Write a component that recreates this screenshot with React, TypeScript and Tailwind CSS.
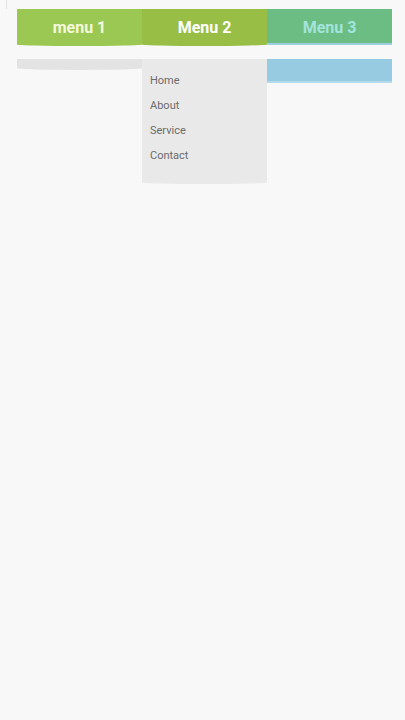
import React from "react";

export default function App() {
  const font = { fontFamily: "Roboto, 'Noto Sans', sans-serif" };
  return (
    <div className="relative min-h-[720px] w-[405px] bg-[#f8f8f8]" style={font}>
      <div className="absolute left-[6px] top-0 h-[9px] w-px bg-[#e2e2e2]" />
      <div className="flex pl-[17px] pt-[9px]">
        {/* column 1 */}
        <div className="flex w-[125px] flex-col">
          <div className="flex h-[34px] items-center justify-center bg-[#9bc753] pt-[3px] text-[16px] font-bold text-[#f4fadb]">
            menu 1
          </div>
          <div className="h-[3px] rounded-b-[50%] bg-[#9bc753]" />
          <div className="h-[13px]" />
          <div className="h-[7px] bg-[#e3e3e3]" />
          <div className="h-[4px] rounded-b-[50%] bg-[#e3e3e3]" />
        </div>
        {/* column 2 */}
        <div className="flex w-[125px] flex-col">
          <div className="flex h-[34px] items-center justify-center bg-[#98be45] pt-[3px] text-[16px] font-bold text-white">
            Menu 2
          </div>
          <div className="h-[3px] rounded-b-[50%] bg-[#98be45]" />
          <div className="h-[13px]" />
          <div className="flex h-[122px] flex-col bg-[#e9e9e9] px-[8px] pt-[14px] text-[11px] text-[#6b6b6b]">
            <div className="h-[25px] leading-[16px]">Home</div>
            <div className="h-[25px] leading-[16px]">About</div>
            <div className="h-[25px] leading-[16px]">Service</div>
            <div className="h-[25px] leading-[16px]">Contact</div>
          </div>
          <div className="h-[3px] rounded-b-[50%] bg-[#e9e9e9]" />
        </div>
        {/* column 3 */}
        <div className="flex w-[125px] flex-col">
          <div className="flex h-[34px] items-center justify-center bg-[#6bbd84] pt-[3px] text-[16px] font-bold text-[#a3e4dc]">
            Menu 3
          </div>
          <div className="h-[2px] bg-[#9ccfe0]" />
          <div className="h-[14px]" />
          <div className="h-[22px] bg-[#96cbe1]" />
          <div className="h-[2px] bg-[#b3daea]" />
        </div>
      </div>
    </div>
  );
}
